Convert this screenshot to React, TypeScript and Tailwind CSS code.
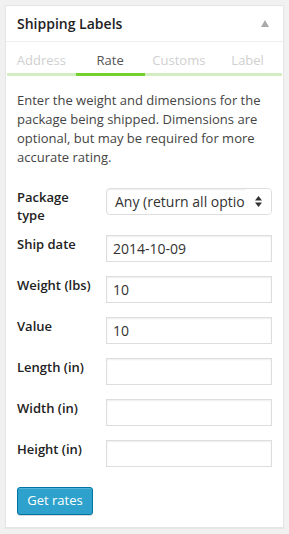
import React from "react";

const tabs = ["Address", "Rate", "Customs", "Label"];

const fields = [
  { label: "Ship date", value: "2014-10-09" },
  { label: "Weight (lbs)", value: "10" },
  { label: "Value", value: "10" },
  { label: "Length (in)", value: "" },
  { label: "Width (in)", value: "" },
  { label: "Height (in)", value: "" },
];

export default function App() {
  return (
    <div className="min-h-[534px] w-[289px] bg-[#f1f1f1] pt-[5px] px-[5px] font-['Open_Sans','Noto_Sans',sans-serif] text-[#444]">
      <div className="w-[279px] bg-white border border-[#e5e5e5] shadow-[0_1px_1px_rgba(0,0,0,0.04)]">
        {/* header */}
        <div className="h-[36px] flex items-center justify-between pl-[11px] pr-[14px] border-b border-[#eeeeee]">
          <span className="text-[14px] font-semibold text-[#222]">Shipping Labels</span>
          <svg width="8" height="7" viewBox="0 0 8 7">
            <path d="M4 0 L8 7 L0 7 Z" fill="#aaaaaa" />
          </svg>
        </div>

        {/* tabs */}
        <div className="mx-[1px] flex">
          {tabs.map((t) => (
            <div
              key={t}
              className={`flex-1 h-[34px] flex items-end justify-center text-[13px] leading-[18px] pb-[4px] border-b-[3px] ${
                t === "Rate" ? "border-[#73d02e] text-[#555]" : "border-[#d2edc1] text-[#d0d0d0]"
              }`}
            >
              {t}
            </div>
          ))}
        </div>

        <div className="px-[11px] pt-[15px] pb-[12px]">
          <p className="text-[13px] leading-[19px] text-[#444] pr-[4px]">
            Enter the weight and dimensions for the package being shipped. Dimensions are optional, but may be required for more accurate rating.
          </p>

          <div className="mt-[21px] flex flex-col">
            <div className="flex items-start mb-[11px]">
              <label className="w-[89px] text-[13px] leading-[18px] font-semibold text-[#222]">
                Package
                <br />
                type
              </label>
              <div className="relative w-[166px] h-[27px] border border-[#dddddd] rounded-[4px] bg-white shadow-[inset_0_1px_2px_rgba(0,0,0,0.07)] flex items-center overflow-hidden">
                <span className="pl-[8px] text-[14px] text-[#333] whitespace-nowrap">
                  Any (return all options)
                </span>
                <div className="absolute right-0 top-0 h-full w-[26px] bg-white flex items-center justify-center">
                  <svg width="7" height="11" viewBox="0 0 7 11">
                    <path d="M3.5 0 L7 4.5 L0 4.5 Z M3.5 11 L7 6.5 L0 6.5 Z" fill="#333" />
                  </svg>
                </div>
              </div>
            </div>

            {fields.map((f) => (
              <div key={f.label} className="flex items-start mb-[14px]">
                <label className="w-[89px] text-[13px] leading-[18px] font-semibold text-[#222]">
                  {f.label}
                </label>
                <div className="w-[166px] h-[27px] border border-[#dddddd] bg-white shadow-[inset_0_1px_2px_rgba(0,0,0,0.07)] flex items-center pl-[6px] text-[14px] text-[#333]">
                  {f.value}
                </div>
              </div>
            ))}
          </div>

          <button className="mt-[6px] w-[76px] h-[28px] rounded-[3px] bg-[#2ea2cc] border border-[#0074a2] text-white text-[13px] font-medium shadow-[inset_0_1px_0_rgba(120,200,230,0.5),0_1px_0_rgba(0,0,0,0.15)]">
            Get rates
          </button>
        </div>
      </div>
    </div>
  );
}
